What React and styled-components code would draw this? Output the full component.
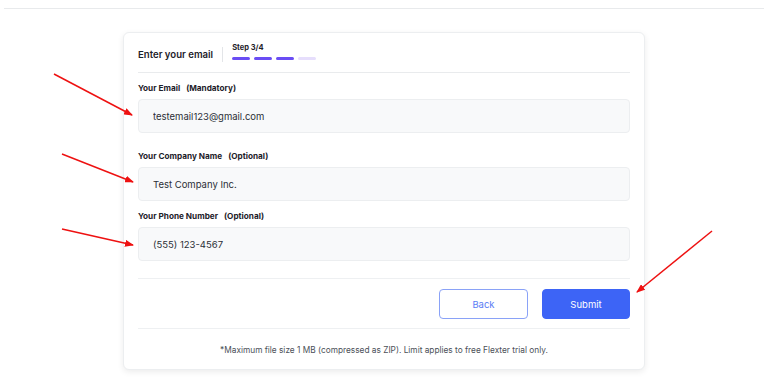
import React from 'react';
import styled, { createGlobalStyle } from 'styled-components';

const Global = createGlobalStyle`
  html, body {
    margin: 0;
    padding: 0;
    background: #fff;
    font-family: Inter, "Noto Sans", sans-serif;
  }
`;

const Page = styled.div`
  position: relative;
  width: 768px;
  height: 379px;
  overflow: hidden;
`;

const TopRule = styled.div`
  margin: 8px 4px 0;
  height: 1px;
  background: #e8eaec;
`;

const Card = styled.div`
  width: 522px;
  margin: 23px auto 0;
  box-sizing: border-box;
  padding: 0 14px;
  background: #fff;
  border: 1px solid #eceef0;
  border-radius: 6px;
  box-shadow: 0 2px 6px rgba(0, 0, 0, 0.08);
`;

const Header = styled.div`
  display: flex;
  align-items: center;
  height: 39px;
  border-bottom: 1px solid #e9ebed;
`;

const Title = styled.div`
  font-size: 9.6px;
  font-weight: 600;
  color: #1d2129;
  padding-right: 9px;
  border-right: 1px solid #e3e5e8;
  line-height: 15px;
  margin-top: 3px;
`;

const Step = styled.div`
  display: flex;
  flex-direction: column;
  margin-left: 9px;
  margin-top: -2px;
`;

const StepText = styled.div`
  font-size: 7.5px;
  font-weight: 700;
  color: #1d2129;
  line-height: 10px;
`;

const Bars = styled.div`
  display: flex;
  gap: 4px;
  margin-top: 4px;
`;

const Bar = styled.span`
  width: 18px;
  height: 3px;
  border-radius: 2px;
  background: ${({ $done }) => ($done ? '#6a4df4' : '#e6defc')};
`;

const Field = styled.div`
  margin-top: ${({ $top }) => $top}px;
`;

const Label = styled.div`
  font-size: 8.2px;
  font-weight: 700;
  color: #1d2129;
  line-height: 11px;
  margin-bottom: 5px;

  span {
    margin-left: 6px;
  }
`;

const Input = styled.input`
  display: block;
  width: 100%;
  box-sizing: border-box;
  height: 34px;
  padding: 0 14px;
  background: #f8f9fa;
  border: 1px solid #eceef0;
  border-radius: 4px;
  font-family: inherit;
  font-size: 9.5px;
  color: #2b2f36;
  outline: none;
`;

const Actions = styled.div`
  display: flex;
  justify-content: flex-end;
  gap: 14px;
  margin-top: 17px;
  padding: 10px 0 9px;
  border-top: 1px solid #eef0f2;
  border-bottom: 1px solid #eef0f2;
`;

const Button = styled.button`
  width: ${({ $w }) => $w}px;
  height: 30px;
  border-radius: 4px;
  font-family: inherit;
  font-size: 9.5px;
  cursor: pointer;
  border: 1px solid ${({ $primary }) => ($primary ? '#3d64f6' : '#8aa2f7')};
  background: ${({ $primary }) => ($primary ? '#3d64f6' : '#fff')};
  color: ${({ $primary }) => ($primary ? '#fff' : '#5b7cf5')};
`;

const Note = styled.div`
  text-align: center;
  font-size: 8.3px;
  color: #4b5058;
  padding: 16px 0 14px;
  line-height: 10px;
`;

const Arrows = styled.svg`
  position: absolute;
  left: 0;
  top: 0;
  pointer-events: none;
`;

const arrows = [
  [54, 74, 132, 115],
  [62, 154, 133, 182],
  [62, 229, 133, 245],
  [712, 231, 637, 292],
];

export default function App() {
  return (
    <Page>
      <Global />
      <TopRule />
      <Card>
        <Header>
          <Title>Enter your email</Title>
          <Step>
            <StepText>Step 3/4</StepText>
            <Bars>
              <Bar $done />
              <Bar $done />
              <Bar $done />
              <Bar />
            </Bars>
          </Step>
        </Header>
        <Field $top={10}>
          <Label>Your Email<span>(Mandatory)</span></Label>
          <Input defaultValue="testemail123@gmail.com" />
        </Field>
        <Field $top={18}>
          <Label>Your Company Name<span>(Optional)</span></Label>
          <Input defaultValue="Test Company Inc." />
        </Field>
        <Field $top={10}>
          <Label>Your Phone Number<span>(Optional)</span></Label>
          <Input defaultValue="(555) 123-4567" />
        </Field>
        <Actions>
          <Button $w={89}>Back</Button>
          <Button $w={88} $primary>Submit</Button>
        </Actions>
        <Note>*Maximum file size 1 MB (compressed as ZIP). Limit applies to free Flexter trial only.</Note>
      </Card>
      <Arrows width="768" height="379">
        <defs>
          <marker id="head" markerWidth="9" markerHeight="7" refX="8" refY="3.5" orient="auto" markerUnits="userSpaceOnUse">
            <path d="M0,0 L9,3.5 L0,7 Z" fill="#ee1111" />
          </marker>
        </defs>
        {arrows.map(([x1, y1, x2, y2], i) => (
          <line key={i} x1={x1} y1={y1} x2={x2} y2={y2} stroke="#ee1111" strokeWidth="1.5" markerEnd="url(#head)" />
        ))}
      </Arrows>
    </Page>
  );
}
